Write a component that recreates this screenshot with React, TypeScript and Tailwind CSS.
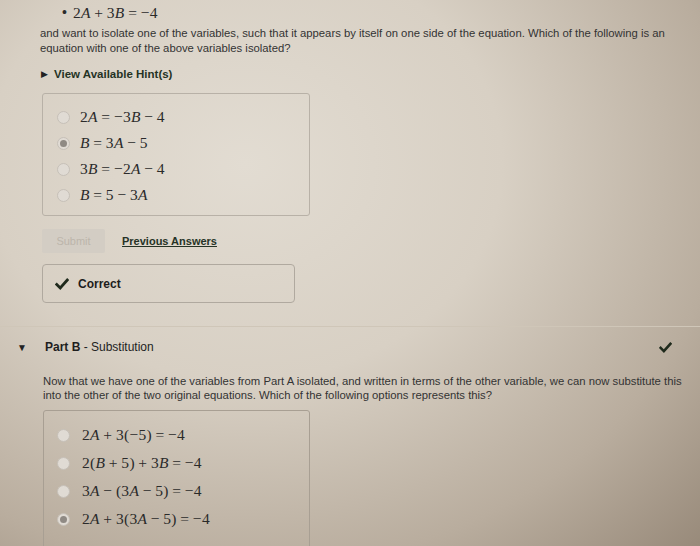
import React from "react";

const M = ({ children }: { children: React.ReactNode }) => (
  <span className="font-['Liberation_Serif',serif] text-[15.5px] text-[#2a2a2a] tracking-[0.3px]">{children}</span>
);
const I = ({ children }: { children: React.ReactNode }) => <i>{children}</i>;
const Op = ({ c }: { c: string }) => <span className="mx-[3.5px]">{c}</span>;

const Radio = ({ checked }: { checked?: boolean }) => (
  <span className="w-[13px] h-[13px] rounded-full border border-[#c6c0b8] bg-[#e0dbd4] flex items-center justify-center shrink-0">
    {checked && <span className="w-[7px] h-[7px] rounded-full bg-[#8f8a84]" />}
  </span>
);

const Check = ({ size = 14 }: { size?: number }) => (
  <svg width={size} height={size} viewBox="0 0 16 16">
    <path d="M2 8.5 L6 12.5 L14 3.5" fill="none" stroke="#1f2a1c" strokeWidth="3.2" strokeLinecap="square" />
  </svg>
);

export default function App() {
  const optsA: React.ReactNode[] = [
    <>2<I>A</I><Op c="=" />−3<I>B</I><Op c="−" />4</>,
    <><I>B</I><Op c="=" />3<I>A</I><Op c="−" />5</>,
    <>3<I>B</I><Op c="=" />−2<I>A</I><Op c="−" />4</>,
    <><I>B</I><Op c="=" />5<Op c="−" />3<I>A</I></>,
  ];
  const optsB: React.ReactNode[] = [
    <>2<I>A</I><Op c="+" />3(−5)<Op c="=" />−4</>,
    <>2(<I>B</I><Op c="+" />5)<Op c="+" />3<I>B</I><Op c="=" />−4</>,
    <>3<I>A</I><Op c="−" />(3<I>A</I><Op c="−" />5)<Op c="=" />−4</>,
    <>2<I>A</I><Op c="+" />3(3<I>A</I><Op c="−" />5)<Op c="=" />−4</>,
  ];
  return (
    <div className="w-[700px] h-[546px] overflow-hidden font-['Liberation_Sans',Arial,sans-serif] text-[#2b2b2b] bg-[radial-gradient(ellipse_at_35%_30%,#e2dcd2_0%,#d8d0c4_40%,#b9ad9e_75%,#988a7a_100%)]">
      <div className="pl-[62px] pt-[3px] flex items-center gap-[6px] h-[22px]">
        <span className="text-[14px]">•</span>
        <M>2<I>A</I><Op c="+" />3<I>B</I><Op c="=" />−4</M>
      </div>
      <p className="pl-[40px] pr-[10px] pt-[4px] text-[11.3px] leading-[15px] text-[#333]">
        and want to isolate one of the variables, such that it appears by itself on one side of the equation. Which of the following is an equation with one of the above variables isolated?
      </p>
      <div className="pl-[41px] pt-[11px] flex items-center gap-[6px] h-[26px]">
        <span className="text-[9px] text-[#222]">▶</span>
        <span className="text-[11.5px] font-bold text-[#253325]">View Available Hint(s)</span>
      </div>
      <div className="ml-[42px] mt-[11px] w-[268px] h-[123px] border border-[#b8b1a7] rounded-[3px] pt-[10px] pl-[14px] flex flex-col">
        {optsA.map((o, i) => (
          <div key={i} className="h-[26px] flex items-center gap-[10px]">
            <Radio checked={i === 1} />
            <M>{o}</M>
          </div>
        ))}
      </div>
      <div className="ml-[42px] mt-[13px] flex items-center gap-[17px]">
        <div className="w-[63px] h-[24px] bg-[#d3cdc4] rounded-[2px] flex items-center justify-center text-[11px] text-[#bcb5ab]">Submit</div>
        <span className="text-[11px] font-bold underline text-[#263326] pt-[1px]">Previous Answers</span>
      </div>
      <div className="ml-[42px] mt-[11px] w-[253px] h-[39px] border border-[#b0a99f] rounded-[4px] flex items-center pl-[12px] gap-[9px]">
        <Check size={14} />
        <span className="text-[12px] font-bold text-[#1d1d1d]">Correct</span>
      </div>
      <div className="mt-[23px] border-t border-[#cfc6b8]" />
      <div className="mt-[10px] h-[20px] pl-[17px] pr-[28px] flex items-center">
        <span className="text-[10px] text-[#222] w-[28px]">▼</span>
        <span className="text-[12px] text-[#1e1e1e]"><b>Part B</b> - Substitution</span>
        <span className="ml-auto"><Check size={13} /></span>
      </div>
      <p className="pl-[43px] pr-[12px] pt-[17px] text-[11.3px] leading-[14px] text-[#333]">
        Now that we have one of the variables from Part A isolated, and written in terms of the other variable, we can now substitute this into the other of the two original equations. Which of the following options represents this?
      </p>
      <div className="ml-[43px] mt-[8px] w-[267px] h-[140px] border border-[#a89f93] rounded-[3px] pt-[10px] pl-[13px] flex flex-col">
        {optsB.map((o, i) => (
          <div key={i} className="h-[28px] flex items-center gap-[12px]">
            <Radio checked={i === 3} />
            <M>{o}</M>
          </div>
        ))}
      </div>
    </div>
  );
}
